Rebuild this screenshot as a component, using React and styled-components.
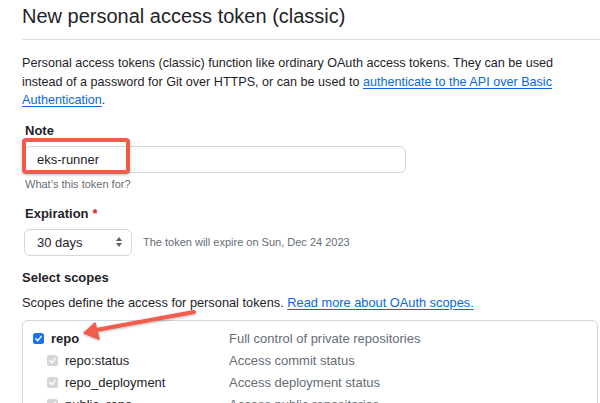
import React from "react";
import styled, { createGlobalStyle } from "styled-components";

const Color = {
  Text: "#1f2328",
  Muted: "#656d76",
  Link: "#0969da",
  Border: "#d0d7de",
  Divider: "#d8dee4",
  Danger: "#cf222e",
  Mark: "#f15b4c",
};

const GlobalStyle = createGlobalStyle`
  html, body {
    margin: 0;
    padding: 0;
    background: #ffffff;
    overflow: hidden;
  }
  body {
    font-family: "Liberation Sans", Arial, sans-serif;
    color: ${Color.Text};
  }
`;

const Page = styled.div`
  position: relative;
  width: 600px;
  height: 403px;
  overflow: hidden;
  padding-left: 22px;
  box-sizing: border-box;
`;

const Subhead = styled.div`
  padding-top: 1px;
  padding-bottom: 8px;
  border-bottom: 1px solid ${Color.Divider};
  margin-right: -22px;
`;

const Title = styled.h2`
  margin: 0;
  font-size: 20px;
  line-height: 30px;
  font-weight: 400;
`;

const Lead = styled.p`
  margin: 14px 0 0;
  width: 545px;
  font-size: 12.6px;
  line-height: 18.5px;
`;

const Link = styled.a`
  color: ${Color.Link};
  text-decoration: underline;
  text-underline-offset: 2px;
`;

const Field = styled.div`
  margin-top: ${({ $gap }) => $gap}px;
  position: relative;
`;

const Label = styled.div`
  font-size: 13px;
  font-weight: 700;
  line-height: 18px;
  padding-left: ${({ $flush }) => ($flush ? 0 : 3)}px;
`;

const Required = styled.span`
  color: ${Color.Danger};
  margin-left: 4px;
`;

const TextInput = styled.div`
  margin: 6px 0 0 2px;
  width: 382px;
  height: 27px;
  box-sizing: border-box;
  border: 1px solid ${Color.Border};
  border-radius: 6px;
  padding: 0 12px;
  display: flex;
  align-items: center;
  font-size: 13px;
`;

const Highlight = styled.div`
  position: absolute;
  left: 0;
  top: 16px;
  width: 108px;
  height: 36px;
  box-sizing: border-box;
  border: 4px solid ${Color.Mark};
  border-radius: 4px;
  box-shadow: 0 1px 3px rgba(0, 0, 0, 0.25);
`;

const Hint = styled.div`
  margin-top: 3px;
  padding-left: 3px;
  font-size: 11px;
  line-height: 16px;
  color: ${Color.Muted};
`;

const SelectRow = styled.div`
  margin: 6px 0 0 2px;
  display: flex;
  align-items: center;
  gap: 11px;
`;

const Select = styled.div`
  width: 108px;
  height: 27px;
  box-sizing: border-box;
  border: 1px solid ${Color.Border};
  border-radius: 6px;
  padding: 0 8px 0 12px;
  display: flex;
  align-items: center;
  justify-content: space-between;
  font-size: 13px;
`;

const Note = styled.span`
  font-size: 11px;
  color: ${Color.Muted};
`;

const Paragraph = styled.div`
  margin-top: 7px;
  font-size: 12.8px;
  line-height: 18px;
`;

const ScopeBox = styled.div`
  margin-top: 8px;
  border: 1px solid ${Color.Border};
  border-radius: 6px;
  width: 576px;
  padding: 7px 0 0 10px;
  box-sizing: border-box;
  height: 120px;
`;

const ScopeRow = styled.div`
  display: flex;
  align-items: center;
  height: 22px;
  font-size: 13px;
`;

const ScopeName = styled.div`
  display: flex;
  align-items: center;
  gap: 7px;
  width: ${({ $child }) => ($child ? 182 : 196)}px;
  padding-left: ${({ $child }) => ($child ? 14 : 0)}px;
  font-weight: ${({ $child }) => ($child ? 400 : 700)};
`;

const ScopeDesc = styled.div`
  color: ${Color.Muted};
`;

const Box = styled.span`
  width: 11px;
  height: 11px;
  border-radius: 2.5px;
  background: ${({ $disabled }) => ($disabled ? "#d6d6d6" : "#1a73e8")};
  display: inline-flex;
  align-items: center;
  justify-content: center;
  flex: none;
`;

const Arrow = styled.svg`
  position: absolute;
  left: 0;
  top: 0;
  pointer-events: none;
  overflow: visible;
`;

function Check({ disabled }) {
  return (
    <Box $disabled={disabled}>
      <svg width="9" height="9" viewBox="0 0 10 10">
        <path
          d="M2 5.2 L4.2 7.4 L8 2.6"
          fill="none"
          stroke="#ffffff"
          strokeWidth="1.6"
          strokeLinecap="round"
          strokeLinejoin="round"
        />
      </svg>
    </Box>
  );
}

function Updown() {
  return (
    <svg width="8" height="12" viewBox="0 0 8 12">
      <path d="M4 1 L7 5 H1 Z" fill="#57606a" />
      <path d="M4 11 L7 7 H1 Z" fill="#57606a" />
    </svg>
  );
}

const scopes = [
  { name: "repo", desc: "Full control of private repositories" },
  { name: "repo:status", desc: "Access commit status", child: true },
  { name: "repo_deployment", desc: "Access deployment status", child: true },
  { name: "public_repo", desc: "Access public repositories", child: true },
];

export default function App() {
  return (
    <Page>
      <GlobalStyle />
      <Subhead>
        <Title>New personal access token (classic)</Title>
      </Subhead>
      <Lead>
        Personal access tokens (classic) function like ordinary OAuth access
        tokens. They can be used instead of a password for Git over HTTPS, or
        can be used to{" "}
        <Link href="#">authenticate to the API over Basic Authentication</Link>.
      </Lead>

      <Field $gap={12}>
        <Label>Note</Label>
        <TextInput>eks-runner</TextInput>
        <Highlight />
        <Hint>What’s this token for?</Hint>
      </Field>

      <Field $gap={13}>
        <Label>
          Expiration<Required>*</Required>
        </Label>
        <SelectRow>
          <Select>
            30 days
            <Updown />
          </Select>
          <Note>The token will expire on Sun, Dec 24 2023</Note>
        </SelectRow>
      </Field>

      <Field $gap={13}>
        <Label $flush>Select scopes</Label>
        <Paragraph>
          Scopes define the access for personal tokens.{" "}
          <Link href="#">Read more about OAuth scopes.</Link>
        </Paragraph>
        <ScopeBox>
          {scopes.map((s) => (
            <ScopeRow key={s.name}>
              <ScopeName $child={s.child}>
                <Check disabled={s.child} />
                {s.name}
              </ScopeName>
              <ScopeDesc>{s.desc}</ScopeDesc>
            </ScopeRow>
          ))}
        </ScopeBox>
      </Field>

      <Arrow width="600" height="403" viewBox="0 0 600 403">
        <defs>
          <filter id="sh" x="-10%" y="-50%" width="120%" height="200%">
            <feDropShadow dx="0" dy="1" stdDeviation="1" floodOpacity="0.3" />
          </filter>
        </defs>
        <g filter="url(#sh)" fill={Color.Mark} stroke={Color.Mark}>
          <line
            x1="194"
            y1="312"
            x2="96"
            y2="330"
            strokeWidth="4"
            strokeLinecap="round"
          />
          <path
            d="M84 333 L95 323 L99 339 Z"
            strokeWidth="1.5"
            strokeLinejoin="round"
          />
        </g>
      </Arrow>
    </Page>
  );
}
